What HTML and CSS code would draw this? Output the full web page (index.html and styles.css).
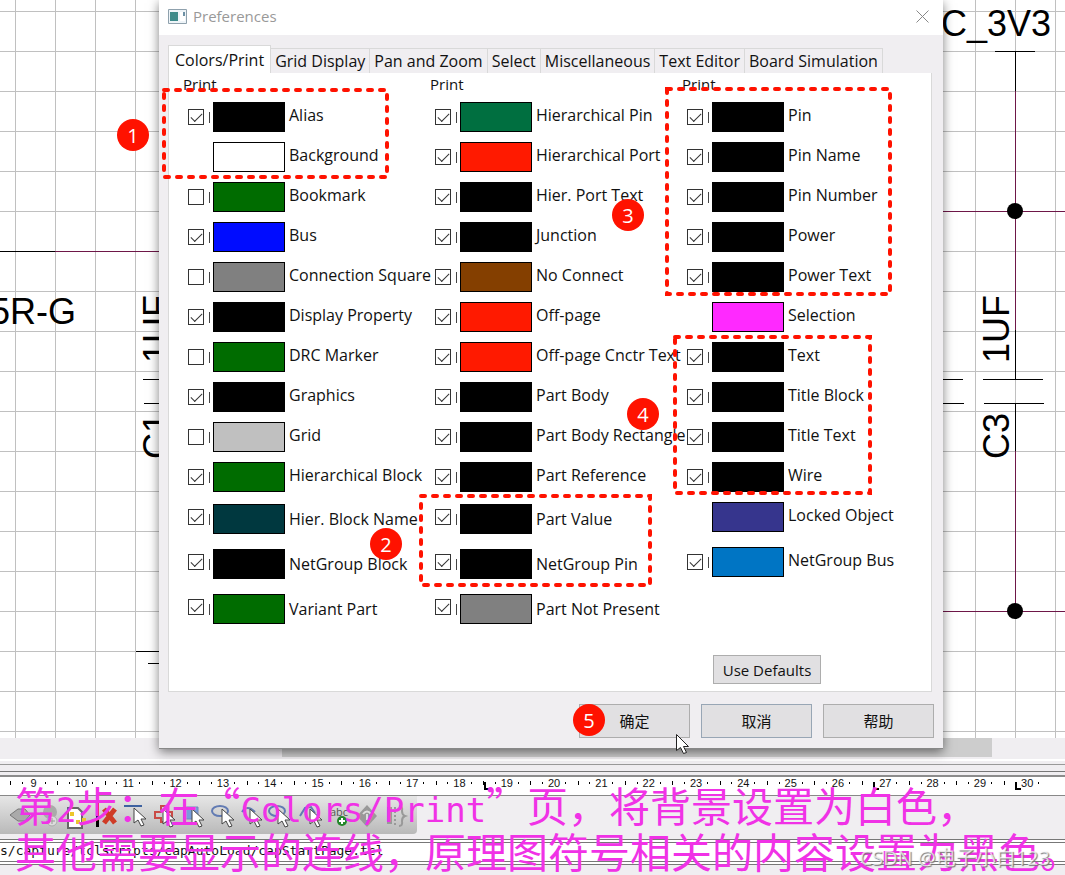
FILE: index.html
```html
<!DOCTYPE html>
<html lang="zh-CN">
<head>
  <meta charset="UTF-8" />
  <meta name="viewport" content="width=device-width, initial-scale=1.0" />
  <title>Preferences</title>
  <link rel="stylesheet" href="styles.css">
</head>
<body>
  <main class="canvas">
    <svg class="schematic" aria-hidden="true">
      <g class="ink">
        <path d="M0 251.500H55M143 379.500h20M144 403.500h20M136 651.500h40M148 663.500h20" />
        <path d="M995 51.500h40M1015.500 51v40M1015.500 330v49M983 379.500h60M984 403.500h60M1015.500 403v48M930 379.500h33M930 403.500h34" />
      </g>
      <path class="wire" d="M55 251.500h110M1015.500 91v239M1015.500 451v160M930 211.500h400M930 611.500h400" />
      <circle cx="1015" cy="211" r="8" />
      <circle cx="1015" cy="611" r="8" />
      <text x="941" y="36">C_3V3</text>
      <text x="-10" y="324">5R-G</text>
      <text transform="translate(169 363) rotate(-90)">1UF</text>
      <text transform="translate(169 459) rotate(-90)">C1</text>
      <text transform="translate(1009 363) rotate(-90)">1UF</text>
      <text transform="translate(1009 459) rotate(-90)">C3</text>
    </svg>
  </main>

  <div class="scrollbar"><div class="thumb"></div></div>
  <div class="splitter"></div>

  <div class="ruler">
    <span>9</span><span>10</span><span>11</span><span>12</span><span>13</span><span>14</span><span>15</span><span>16</span><span>17</span><span>18</span><span>19</span><span>20</span><span>21</span><span>22</span><span>23</span><span>24</span><span>25</span><span>26</span><span>27</span><span>28</span><span>29</span><span>30</span>
    <i class="stop stop-a"></i><i class="stop stop-b"></i><i class="stop stop-c"></i>
  </div>

  <div class="toolbar">
    <svg class="tools" width="417" height="38" aria-hidden="true">
      <defs>
        <path id="arrow" d="M0 0v15l4-3 3 6 3-1-3-6h5z" fill="#fff" stroke="#444" />
      </defs>
      <path d="M10 19l8-6h7l5 6-5 6h-7z" fill="#aaa" stroke="#777" />
      <circle cx="50" cy="16" r="7" fill="#aaa" />
      <circle cx="52" cy="25" r="5" fill="#ddd" stroke="#aaa" />
      <path d="M49 25h6M52 22v6M40 17h8" stroke="#999" />
      <path d="M68 12h10l4 4v16H68z" fill="#fff" stroke="#666" stroke-width="2" />
      <path d="M70 16h4v4h-4zM76 24h4v4h-4zM82 22h4v4h-4z" fill="#edc52b" />
      <path d="M96 7h3v24h-3z" fill="#000" />
      <path d="M104 13l11 14M115 13l-11 14" stroke="#cf3b26" stroke-width="5" />
      <path d="M124 10h18" stroke="#3e62a0" stroke-width="2" />
      <use href="#arrow" x="134" y="12" />
      <path d="M155 16h6v-6h6v6h5v6h-5v4h-6v-4h-6z" fill="none" stroke="#c94b46" stroke-width="2" />
      <use href="#arrow" x="163" y="13" />
      <path d="M184 11h14v12h-14z" fill="#789cdb" stroke="#7188bd" />
      <use href="#arrow" x="192" y="13" />
      <ellipse cx="220" cy="15" rx="8" ry="5" fill="none" stroke="#627bb3" stroke-width="2" />
      <use href="#arrow" x="222" y="13" />
      <path d="M242 16q5-8 13 0" fill="none" stroke="#627bb3" stroke-width="2" />
      <use href="#arrow" x="250" y="13" />
      <ellipse cx="277" cy="15" rx="8" ry="5" fill="none" stroke="#627bb3" stroke-width="2" />
      <use href="#arrow" x="278" y="13" />
      <path d="M300 20l5-8 6-1 4 6" fill="none" stroke="#627bb3" stroke-width="2" />
      <use href="#arrow" x="310" y="13" />
      <text x="330" y="20">abc</text>
      <circle cx="342" cy="25" r="5" fill="#23872a" />
      <path d="M339 25h6M342 22v6" stroke="#fff" stroke-width="2" />
      <path d="M367 9l10 11-10 11-10-11z" fill="#999" />
      <path d="M363 18q4-5 8 0M367 18v6" fill="none" stroke="#ddd" stroke-width="2" />
      <path d="M387 11h5v17h-5z" fill="#999" />
      <path d="M395 11v18" stroke="#999" stroke-width="2" stroke-dasharray="2 2" />
      <path d="M399 10q4 0 3 5 0 4 3 5-3 1-3 5 1 5-3 5" fill="none" stroke="#999" stroke-width="2" />
    </svg>
  </div>

  <div class="command">s/capture/tclscripts/capAutoLoad/capStartPage.tcl</div>

  <section class="dialog" role="dialog" aria-labelledby="dialogTitle">
    <header class="titlebar">
      <svg width="19" height="15" aria-hidden="true">
        <path d="M.5.500h18v14H.5z" fill="#eef4f8" stroke="#8fa1ad" />
        <path d="M2 3h8v9H2z" fill="#3d8a8a" />
        <path d="M12 3h5v9h-5z" fill="#fff" />
        <path d="M15 3h2v4h-2z" fill="#6d91a5" />
      </svg>
      <h1 id="dialogTitle">Preferences</h1>
      <button class="close" type="button" aria-label="Close">
        <svg width="13" height="13"><path d="M.5.500l12 12M12.500.500l-12 12" stroke="#888" /></svg>
      </button>
    </header>

    <nav class="tabs">
      <button class="tab active" type="button">Colors/Print</button>
      <button class="tab" type="button">Grid Display</button>
      <button class="tab" type="button">Pan and Zoom</button>
      <button class="tab" type="button">Select</button>
      <button class="tab" type="button">Miscellaneous</button>
      <button class="tab" type="button">Text Editor</button>
      <button class="tab" type="button">Board Simulation</button>
    </nav>

    <div class="panel">
      <div class="columns">
        <div class="column">
          <h2>Print</h2>
          <div class="row"><input type="checkbox" id="alias" checked><i class="stub"></i><span class="swatch"></span><label for="alias">Alias</label></div>
          <div class="row no-check"><span class="swatch white"></span><span>Background</span></div>
          <div class="row"><input type="checkbox" id="bookmark"><i class="stub"></i><span class="swatch green"></span><label for="bookmark">Bookmark</label></div>
          <div class="row"><input type="checkbox" id="bus" checked><i class="stub"></i><span class="swatch blue"></span><label for="bus">Bus</label></div>
          <div class="row"><input type="checkbox" id="square"><i class="stub"></i><span class="swatch gray"></span><label for="square">Connection Square</label></div>
          <div class="row"><input type="checkbox" id="display" checked><i class="stub"></i><span class="swatch"></span><label for="display">Display Property</label></div>
          <div class="row"><input type="checkbox" id="drc"><i class="stub"></i><span class="swatch green"></span><label for="drc">DRC Marker</label></div>
          <div class="row"><input type="checkbox" id="graphics" checked><i class="stub"></i><span class="swatch"></span><label for="graphics">Graphics</label></div>
          <div class="row"><input type="checkbox" id="grid"><i class="stub"></i><span class="swatch silver"></span><label for="grid">Grid</label></div>
          <div class="row"><input type="checkbox" id="hblock" checked><i class="stub"></i><span class="swatch green"></span><label for="hblock">Hierarchical Block</label></div>
          <div class="row tall"><input type="checkbox" id="hname" checked><i class="stub"></i><span class="swatch teal"></span><label for="hname">Hier. Block Name</label></div>
          <div class="row tall"><input type="checkbox" id="ngblock" checked><i class="stub"></i><span class="swatch"></span><label for="ngblock">NetGroup Block</label></div>
          <div class="row tall"><input type="checkbox" id="variant" checked><i class="stub"></i><span class="swatch green"></span><label for="variant">Variant Part</label></div>
        </div>

        <div class="column">
          <h2>Print</h2>
          <div class="row"><input type="checkbox" id="hpin" checked><i class="stub"></i><span class="swatch emerald"></span><label for="hpin">Hierarchical Pin</label></div>
          <div class="row"><input type="checkbox" id="hport" checked><i class="stub"></i><span class="swatch red"></span><label for="hport">Hierarchical Port</label></div>
          <div class="row"><input type="checkbox" id="hporttext" checked><i class="stub"></i><span class="swatch"></span><label for="hporttext">Hier. Port Text</label></div>
          <div class="row"><input type="checkbox" id="junction" checked><i class="stub"></i><span class="swatch"></span><label for="junction">Junction</label></div>
          <div class="row"><input type="checkbox" id="noconnect" checked><i class="stub"></i><span class="swatch brown"></span><label for="noconnect">No Connect</label></div>
          <div class="row"><input type="checkbox" id="offpage" checked><i class="stub"></i><span class="swatch red"></span><label for="offpage">Off-page</label></div>
          <div class="row"><input type="checkbox" id="offtext" checked><i class="stub"></i><span class="swatch red"></span><label for="offtext">Off-page Cnctr Text</label></div>
          <div class="row"><input type="checkbox" id="pbody" checked><i class="stub"></i><span class="swatch"></span><label for="pbody">Part Body</label></div>
          <div class="row"><input type="checkbox" id="prect" checked><i class="stub"></i><span class="swatch"></span><label for="prect">Part Body Rectangle</label></div>
          <div class="row"><input type="checkbox" id="pref" checked><i class="stub"></i><span class="swatch"></span><label for="pref">Part Reference</label></div>
          <div class="row tall"><input type="checkbox" id="pvalue" checked><i class="stub"></i><span class="swatch"></span><label for="pvalue">Part Value</label></div>
          <div class="row tall"><input type="checkbox" id="ngpin" checked><i class="stub"></i><span class="swatch"></span><label for="ngpin">NetGroup Pin</label></div>
          <div class="row tall"><input type="checkbox" id="pnot" checked><i class="stub"></i><span class="swatch gray"></span><label for="pnot">Part Not Present</label></div>
        </div>

        <div class="column">
          <h2>Print</h2>
          <div class="row"><input type="checkbox" id="pin" checked><i class="stub"></i><span class="swatch"></span><label for="pin">Pin</label></div>
          <div class="row"><input type="checkbox" id="pinname" checked><i class="stub"></i><span class="swatch"></span><label for="pinname">Pin Name</label></div>
          <div class="row"><input type="checkbox" id="pinnumber" checked><i class="stub"></i><span class="swatch"></span><label for="pinnumber">Pin Number</label></div>
          <div class="row"><input type="checkbox" id="power" checked><i class="stub"></i><span class="swatch"></span><label for="power">Power</label></div>
          <div class="row"><input type="checkbox" id="powertext" checked><i class="stub"></i><span class="swatch"></span><label for="powertext">Power Text</label></div>
          <div class="row no-check"><span class="swatch magenta"></span><span>Selection</span></div>
          <div class="row"><input type="checkbox" id="text" checked><i class="stub"></i><span class="swatch"></span><label for="text">Text</label></div>
          <div class="row"><input type="checkbox" id="tblock" checked><i class="stub"></i><span class="swatch"></span><label for="tblock">Title Block</label></div>
          <div class="row"><input type="checkbox" id="ttext" checked><i class="stub"></i><span class="swatch"></span><label for="ttext">Title Text</label></div>
          <div class="row"><input type="checkbox" id="wire" checked><i class="stub"></i><span class="swatch"></span><label for="wire">Wire</label></div>
          <div class="row spaced no-check"><span class="swatch indigo"></span><span>Locked Object</span></div>
          <div class="row spaced"><input type="checkbox" id="ngbus" checked><i class="stub"></i><span class="swatch azure"></span><label for="ngbus">NetGroup Bus</label></div>
        </div>
      </div>
      <div class="panel-actions">
        <button class="btn defaults" type="button">Use Defaults</button>
      </div>
    </div>

    <footer class="actions">
      <button class="btn" type="button">确定</button>
      <button class="btn cancel" type="button">取消</button>
      <button class="btn" type="button">帮助</button>
    </footer>
  </section>

  <svg class="marks" aria-hidden="true">
    <g class="frames">
      <rect x="164" y="90" width="223" height="87" />
      <rect x="421" y="496" width="229" height="89" />
      <rect x="667" y="89" width="223" height="205" />
      <rect x="675" y="337" width="195" height="156" />
    </g>
    <g class="badges">
      <circle cx="133" cy="135" r="16" /><text x="133" y="143">1</text>
      <circle cx="386" cy="544" r="16" /><text x="386" y="552">2</text>
      <circle cx="628" cy="215" r="16" /><text x="628" y="223">3</text>
      <circle cx="643" cy="414" r="16" /><text x="643" y="422">4</text>
      <circle cx="589" cy="720" r="16" /><text x="589" y="728">5</text>
    </g>
    <path d="M676.500 734.500v16l4-3 3 6 3-1-3-6h5z" fill="#fff" stroke="#222" />
  </svg>

  <div class="caption">
    <p>第<span>2</span>步：在“<span>Colors/Print</span>”页，将背景设置为白色，</p>
    <p>其他需要显示的连线，原理图符号相关的内容设置为黑色。</p>
  </div>
  <div class="watermark">CSDN @电子小白123</div>
</body>
</html>
```

FILE: styles.css
```css
* {
  box-sizing: border-box;
}
body {
  margin: 0;
  height: 100vh;
  position: relative;
  display: flex;
  flex-direction: column;
  overflow: hidden;
  background: #f0eef1;
  color: #111;
  font-family: "Open Sans", "Noto Sans CJK SC", sans-serif;
  font-size: 16px;
}
button {
  font: inherit;
  color: inherit;
}

/* schematic page */
.canvas {
  flex: 1;
  min-height: 0;
  overflow: hidden;
  background-color: #fff;
  background-image:
    linear-gradient(to right, #c0c0c0 1px, transparent 1px),
    linear-gradient(#c0c0c0 1px, transparent 1px);
  background-size: 40px 40px;
  background-position: 15px 11px;
}
.schematic {
  display: block;
  width: 100%;
  height: 100%;
  font-family: "Liberation Sans", sans-serif;
  font-size: 36px;
}
.ink {
  stroke: #000;
}
.wire {
  fill: none;
  stroke: #6e1748;
}

/* bottom bars */
.scrollbar {
  height: 19px;
  padding: 0 73px 0 282px;
}
.thumb {
  height: 100%;
  background: #cdcdcd;
}
.splitter {
  height: 18px;
  margin-top: 2px;
  border-top: 2px solid #fff;
  background: linear-gradient(#999, #999) 0 3px / 100% 1px no-repeat,
    linear-gradient(#777, #777) 0 10px / 100% 1px no-repeat;
  border-bottom: 2px solid #8c8c8c;
}
.ruler {
  position: relative;
  display: flex;
  height: 18px;
  padding: 0 14px 0 10px;
  background: #fff;
  font-family: "Liberation Sans", sans-serif;
  font-size: 11px;
  line-height: 13px;
}
.ruler span {
  flex: 1;
  text-align: center;
  background:
    linear-gradient(#000, #000) 0 4px / 1px 4px no-repeat,
    linear-gradient(#000, #000) 25% 5px / 1px 2px no-repeat,
    linear-gradient(#000, #000) 75% 5px / 1px 2px no-repeat;
}
.stop {
  position: absolute;
  top: 5px;
  width: 6px;
  height: 8px;
  border: solid #000;
  border-width: 0 0 2px 2px;
}
.stop-a {
  left: 484px;
}
.stop-b {
  left: 873px;
}
.stop-c {
  left: 1015px;
}
.toolbar {
  height: 44px;
  border-top: 1px solid #888;
}
.tools {
  display: block;
  background: linear-gradient(#e6e6e6, #b9b9b9);
  border-radius: 0 0 4px 0;
  font-size: 11px;
  fill: #555;
}
.command {
  height: 26px;
  margin-bottom: 10px;
  padding-top: 2px;
  border: double #777;
  border-width: 4px 0;
  background: #fff;
  font-family: "DejaVu Sans Mono", monospace;
  font-size: 13px;
  line-height: 12px;
  white-space: nowrap;
}

/* dialog */
.dialog {
  position: absolute;
  top: 0;
  left: 159px;
  right: 122px;
  background: #f0eef1;
  border-bottom: 1px solid #888;
  box-shadow: 0 3px 10px rgba(0, 0, 0, 0.5);
}
.titlebar {
  display: flex;
  align-items: center;
  gap: 6px;
  height: 35px;
  padding: 0 14px 3px 9px;
  background: #fff;
}
.titlebar h1 {
  flex: 1;
  margin: 0;
  color: #999;
  font-size: 15px;
  font-weight: normal;
}
.close {
  display: flex;
  padding: 0;
  border: 0;
  background: none;
}
.tabs {
  display: flex;
  align-items: flex-end;
  height: 38px;
  padding-left: 9px;
}
.tab {
  height: 25px;
  padding: 0 4px;
  border: 1px solid #d9d9d9;
  border-width: 1px 1px 0 0;
  background: #f0eef1;
  line-height: 22px;
  white-space: nowrap;
}
.tab.active {
  height: 28px;
  padding: 0 6px;
  border-left-width: 1px;
  background: #fff;
}
.panel {
  margin: 0 11px 0 9px;
  border: 1px solid #d9d9d9;
  border-top: 0;
  background: #fff;
}
.columns {
  display: grid;
  grid-template-columns: 247px 252px 1fr;
  padding-left: 14px;
}
.column h2 {
  height: 24px;
  margin: 0;
  font-size: 15px;
  font-weight: normal;
  line-height: 22px;
}
.row {
  display: flex;
  align-items: flex-start;
  height: 40px;
  padding: 5px 0 0 5px;
  line-height: 26px;
  white-space: nowrap;
}
.row > * {
  flex-shrink: 0;
}
.row.tall {
  height: 45px;
  padding-top: 7px;
  line-height: 30px;
}
.row.spaced {
  height: 45px;
}
.row.no-check {
  padding-left: 30px;
}
.row input {
  appearance: none;
  position: relative;
  width: 16px;
  height: 16px;
  margin: 7px 5px 0 0;
  border: 1px solid #333;
  background: #fff;
}
.row.tall input {
  margin-top: 5px;
}
.row input:checked::after {
  content: "";
  position: absolute;
  top: 3px;
  left: 2px;
  width: 10px;
  height: 5px;
  border: solid #333;
  border-width: 0 0 1px 1px;
  transform: rotate(-45deg);
}
.stub {
  width: 4px;
  height: 11px;
  margin-top: 10px;
  border-left: 1px solid #444;
}
.swatch {
  width: 72px;
  height: 30px;
  margin-right: 4px;
  border: 1px solid #000;
  background: #000;
}
.white { background: #fff; }
.green { background: #006c00; }
.blue { background: #000cff; }
.gray { background: #808080; }
.silver { background: #c0c0c0; }
.teal { background: #00383f; }
.emerald { background: #006f40; }
.red { background: #ff1a00; }
.brown { background: #843f00; }
.magenta { background: #ff29ff; }
.indigo { background: #36358d; }
.azure { background: #0075c4; }
.panel-actions {
  display: flex;
  justify-content: flex-end;
  padding: 23px 110px 7px 0;
}
.actions {
  display: flex;
  justify-content: flex-end;
  gap: 11px;
  padding: 12px 9px 10px;
}
.btn {
  width: 111px;
  height: 34px;
  padding: 0;
  border: 1px solid #adadad;
  background: #e1e0e2;
  font-size: 15px;
  line-height: 30px;
}
.btn.defaults {
  width: 108px;
  height: 29px;
  line-height: 26px;
}
.btn.cancel {
  border-color: #98a6b5;
}

/* tutorial marks */
.marks {
  position: absolute;
  top: 0;
  left: 0;
  width: 100%;
  height: 100%;
  pointer-events: none;
}
.frames {
  fill: none;
  stroke: #ff1200;
  stroke-width: 4px;
  stroke-linecap: round;
  stroke-dasharray: 4 8;
}
.badges circle {
  fill: #ff1200;
}
.badges text {
  fill: #fff;
  font-size: 20px;
  text-anchor: middle;
}
.caption {
  position: absolute;
  left: 15px;
  bottom: 2px;
  color: #f032e6;
  font-family: "Noto Sans CJK SC", sans-serif;
  font-size: 41px;
  line-height: 46px;
  white-space: nowrap;
  pointer-events: none;
}
.caption p {
  margin: 0;
}
.caption span {
  font-family: "DejaVu Sans Mono", monospace;
  font-size: 34px;
  line-height: 34px;
}
.watermark {
  position: absolute;
  right: 15px;
  bottom: 4px;
  color: rgba(255, 255, 255, 0.7);
  font-size: 20px;
  text-shadow: 1px 1px 1px #777;
  pointer-events: none;
}
```
